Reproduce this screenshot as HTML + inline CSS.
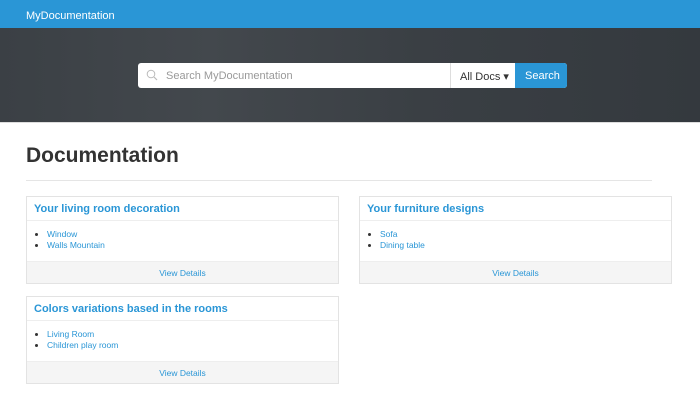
<!DOCTYPE html>
<html><head><style>
*{box-sizing:border-box;margin:0;padding:0}
body{width:700px;height:410px;background:#fff;font-family:"Liberation Sans",sans-serif;overflow:hidden;position:relative}
.nav{height:28px;background:#2a96d6;color:#fff;font-size:11px;padding:10px 0 0 26px;line-height:12px}
.hero{height:95px;background:linear-gradient(90deg,#3b4045,#43484d 30%,#3a3f44 60%,#34393e);position:relative;border-bottom:1px solid #ddd}
.sb{position:absolute;left:138px;top:35px;width:429px;height:25px;background:#fff;border-radius:3px;display:flex;font-size:11px}
.sb .in{flex:1;color:#999;padding:7px 0 0 28px;position:relative}
.sb .dd{width:65px;border-left:1px solid #ddd;color:#333;padding:7px 0 0 9px}
.sb .bt{width:52px;background:#2a96d6;color:#fff;padding:7px 0 0 10px;border-radius:0 3px 3px 0}
h1{position:absolute;left:26px;top:144px;font-size:21px;color:#333;font-weight:bold}
.hr{position:absolute;left:26px;width:626px;top:180px;border-top:1px solid #e5e5e5}
.card{position:absolute;width:313px;height:88px;border:1px solid #e3e3e3;font-size:8.5px}
.card .h{height:24px;border-bottom:1px solid #eee;color:#2a96d6;font-size:11px;font-weight:bold;padding:6px 0 0 7px}
.card ul{height:40px;padding:8px 0 0 20px;color:#2a96d6;line-height:11px}
.card li::marker{color:#333}
.card .f{height:22px;background:#f5f5f5;border-top:1px solid #eee;color:#2a96d6;text-align:center;padding-top:6px}
</style></head><body>
<div class="nav">MyDocumentation</div>
<div class="hero"><div class="sb"><div class="in"><svg style="position:absolute;left:8px;top:6px" width="12" height="12" viewBox="0 0 12 12"><circle cx="5" cy="5" r="3.8" fill="none" stroke="#bbb" stroke-width="1"/><path d="M8 8l3 3" stroke="#bbb" stroke-width="1.2"/></svg>Search MyDocumentation</div><div class="dd">All Docs ▾</div><div class="bt">Search</div></div></div>
<h1>Documentation</h1>
<div class="hr"></div>
<div class="card" style="left:26px;top:196px"><div class="h">Your living room decoration</div><ul><li>Window</li><li>Walls Mountain</li></ul><div class="f">View Details</div></div>
<div class="card" style="left:359px;top:196px"><div class="h">Your furniture designs</div><ul><li>Sofa</li><li>Dining table</li></ul><div class="f">View Details</div></div>
<div class="card" style="left:26px;top:296px"><div class="h">Colors variations based in the rooms</div><ul><li>Living Room</li><li>Children play room</li></ul><div class="f">View Details</div></div>
</body></html>
